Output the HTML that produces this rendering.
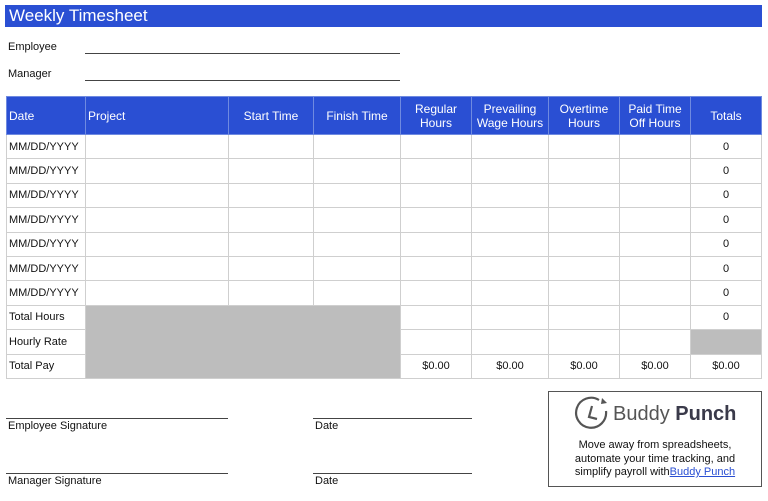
<!DOCTYPE html>
<html><head><style>
*{margin:0;padding:0;box-sizing:border-box}
body{width:768px;height:501px;background:#fff;font-family:"Liberation Sans",Arial,sans-serif;color:#111;position:relative;overflow:hidden}
.a{position:absolute}
.title{left:5px;top:5px;width:757px;height:22px;background:#2a4fd3;color:#fff;font-size:17px;line-height:22px;padding-left:4px}
.lbl{font-size:11px}
.line{height:1px;background:#444}
table{position:absolute;left:6px;top:96px;border-collapse:collapse;table-layout:fixed;font-size:11px}
td{border:1px solid #cfcfcf;height:24.4px;padding:0 2px;white-space:nowrap}
thead td{background:#2a4fd3;color:#fff;height:38px;border:1px solid #6f8ae0;text-align:center;line-height:14px;font-size:12px}
thead td.l{text-align:left}
.c{text-align:center}
.g{background:#bdbdbd}
.box{left:548px;top:391px;width:214px;height:96px;border:1px solid #555}
</style></head><body>
<div class="a title">Weekly Timesheet</div>
<div class="a lbl" style="left:8px;top:41px">Employee</div>
<div class="a line" style="left:85px;top:53px;width:315px"></div>
<div class="a lbl" style="left:8px;top:68px">Manager</div>
<div class="a line" style="left:85px;top:80px;width:315px"></div>
<table>
<colgroup><col style="width:79px"><col style="width:143px"><col style="width:85px"><col style="width:87px"><col style="width:71px"><col style="width:77px"><col style="width:71px"><col style="width:71px"><col style="width:71px"></colgroup>
<thead><tr><td class="l">Date</td><td class="l">Project</td><td>Start Time</td><td>Finish Time</td><td>Regular<br>Hours</td><td>Prevailing<br>Wage Hours</td><td>Overtime<br>Hours</td><td>Paid Time<br>Off Hours</td><td>Totals</td></tr></thead>
<tbody>
<tr><td>MM/DD/YYYY</td><td></td><td></td><td></td><td></td><td></td><td></td><td></td><td class="c">0</td></tr>
<tr><td>MM/DD/YYYY</td><td></td><td></td><td></td><td></td><td></td><td></td><td></td><td class="c">0</td></tr>
<tr><td>MM/DD/YYYY</td><td></td><td></td><td></td><td></td><td></td><td></td><td></td><td class="c">0</td></tr>
<tr><td>MM/DD/YYYY</td><td></td><td></td><td></td><td></td><td></td><td></td><td></td><td class="c">0</td></tr>
<tr><td>MM/DD/YYYY</td><td></td><td></td><td></td><td></td><td></td><td></td><td></td><td class="c">0</td></tr>
<tr><td>MM/DD/YYYY</td><td></td><td></td><td></td><td></td><td></td><td></td><td></td><td class="c">0</td></tr>
<tr><td>MM/DD/YYYY</td><td></td><td></td><td></td><td></td><td></td><td></td><td></td><td class="c">0</td></tr>
<tr><td>Total Hours</td><td class="g" colspan="3" rowspan="3"></td><td></td><td></td><td></td><td></td><td class="c">0</td></tr>
<tr><td>Hourly Rate</td><td></td><td></td><td></td><td></td><td class="g"></td></tr>
<tr><td>Total Pay</td><td class="c">$0.00</td><td class="c">$0.00</td><td class="c">$0.00</td><td class="c">$0.00</td><td class="c">$0.00</td></tr>
</tbody></table>
<div class="a line" style="left:6px;top:418px;width:222px"></div>
<div class="a lbl" style="left:8px;top:420px">Employee Signature</div>
<div class="a line" style="left:313px;top:418px;width:159px"></div>
<div class="a lbl" style="left:315px;top:420px">Date</div>
<div class="a line" style="left:6px;top:473px;width:222px"></div>
<div class="a lbl" style="left:8px;top:475px">Manager Signature</div>
<div class="a line" style="left:313px;top:473px;width:159px"></div>
<div class="a lbl" style="left:315px;top:475px">Date</div>
<div class="a box">
<svg class="a" style="left:24px;top:3px" width="40" height="38" viewBox="0 0 40 38"><path d="M26 5 A15 15 0 1 0 33 16" fill="none" stroke="#555" stroke-width="2.2"/><path d="M29 3 l5 5 -6 1z" fill="#555"/><path d="M19 11 L16 22 L24 24" fill="none" stroke="#555" stroke-width="2.2"/></svg>
<div class="a" style="left:64px;top:11px;font-size:20px;color:#555">Buddy <b style="color:#3a3a4a">Punch</b></div>
<div class="a" style="left:0;top:47px;width:212px;text-align:center;font-size:11px;line-height:13.5px;color:#111">Move away from spreadsheets,<br>automate your time tracking, and<br>simplify payroll with<span style="color:#2a4fd3;text-decoration:underline">Buddy Punch</span></div>
</div>
</body></html>
